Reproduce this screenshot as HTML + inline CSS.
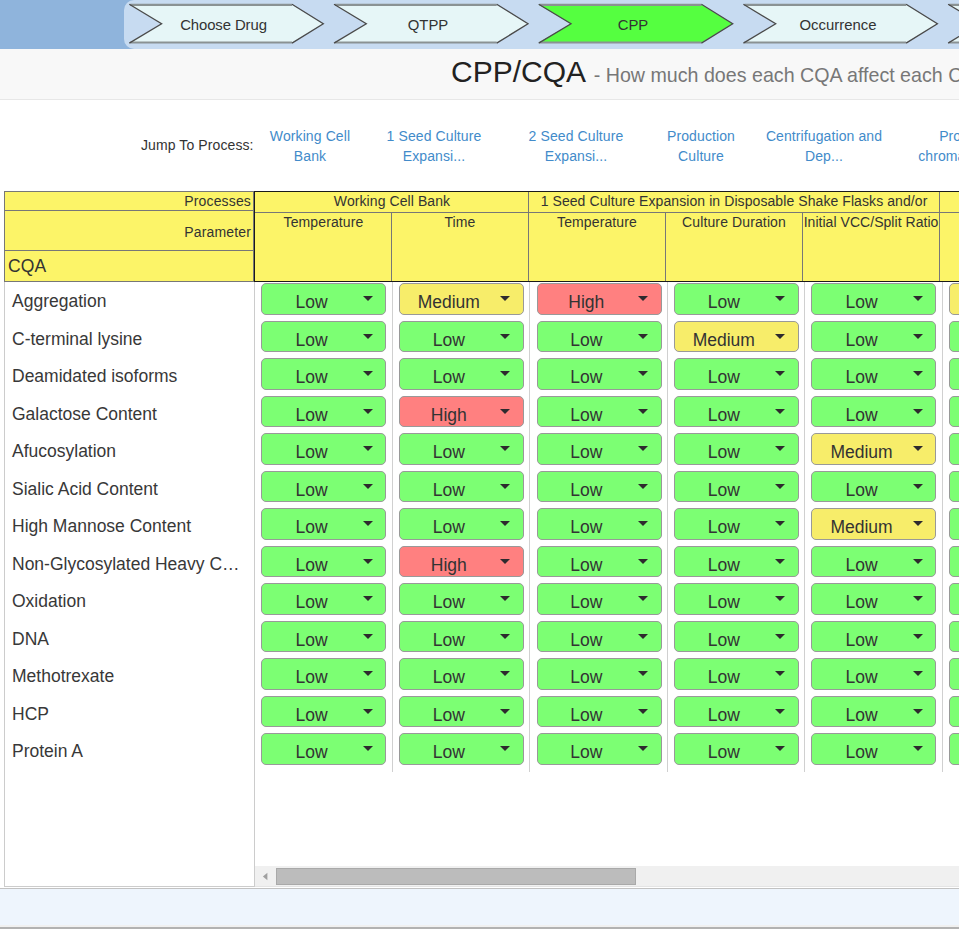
<!DOCTYPE html>
<html><head><meta charset="utf-8"><title>CPP/CQA</title>
<style>
html,body{margin:0;padding:0}
body{width:959px;height:929px;overflow:hidden;position:relative;background:#fff;font-family:"Liberation Sans",sans-serif;color:#333}
.abs{position:absolute}
#nav{position:absolute;left:0;top:0;width:959px;height:49px;background:#8fb4dc}
#navp{position:absolute;left:124px;top:0;width:900px;height:49px;background:#c7dbf1;border-radius:10px 0 0 10px}
#navsvg{position:absolute;left:0;top:0}
.nt{position:absolute;top:14.7px;width:160px;text-align:center;font-size:14.9px;line-height:20px;color:#333}
#tb{position:absolute;left:0;top:49px;width:959px;height:50px;background:#f8f8f8;border-bottom:1px solid #e7e7e7}
#h1{position:absolute;left:451px;top:53.5px;white-space:nowrap;font-size:30px;line-height:36px;color:#222}
#h1 small{font-size:19.65px;color:#777;margin-left:1px}
.jl{letter-spacing:0.1px;position:absolute;font-size:14px;line-height:20px;color:#428bca;text-align:center;white-space:nowrap;transform:translateX(-50%)}
#jt{position:absolute;left:100px;width:153.6px;top:135px;text-align:right;letter-spacing:0.1px;font-size:14px;line-height:20px;color:#333}
#lh{position:absolute;left:4px;top:191px;width:250px;height:91px;background:#fcf468;border:1px solid #777;box-sizing:border-box}
#lh div{position:absolute;left:0;width:248px;box-sizing:border-box;font-size:14px;letter-spacing:0.15px}
#rh{position:absolute;left:254px;top:191px;width:720px;height:91px;background:#fcf468;border:1px solid #1a1a1a;border-right:none;box-sizing:border-box}
.ph{letter-spacing:0.08px;position:absolute;top:192px;height:18px;line-height:18px;font-size:14px;text-align:center;color:#333;white-space:nowrap;overflow:hidden}
.pm{letter-spacing:0.12px;position:absolute;top:213px;height:18px;line-height:18px;font-size:14px;text-align:center;color:#333;white-space:nowrap;overflow:hidden}
.vl{position:absolute;width:1px;background:#777}
.cl{position:absolute;width:1px;background:#d0d0d0;top:282px;height:490px}
#lc{position:absolute;left:4px;top:282px;width:251px;height:605px;border:1px solid #ccc;border-top:none;box-sizing:border-box;background:#fff}
.rl{position:absolute;left:12px;width:236px;height:32px;line-height:36px;font-size:17.5px;color:#383838;white-space:nowrap;letter-spacing:0}
.b{position:absolute;width:125px;height:31.5px;box-sizing:border-box;border:1px solid #999;border-radius:5px}
.b span{position:absolute;left:-1px;width:101px;text-align:center;top:0px;line-height:36px;font-size:17.5px;color:#333;height:28px;overflow:visible}
.b i{position:absolute;left:101px;top:12.3px;width:0;height:0;border-left:5px solid transparent;border-right:5px solid transparent;border-top:5px solid #2e2a2e}
.lo{background:#7cff73}
.me{background:#f7ed6a}
.hi{background:#ff8080}
#sb{position:absolute;left:255px;top:866px;width:704px;height:20px;background:#f0f0f0;border-bottom:1px solid #e4e4e4}
#th{position:absolute;left:276px;top:868px;width:360px;height:17px;background:#bcbcbc;border:1px solid #a9a9a9;box-sizing:border-box}
#foot{position:absolute;left:0;top:888px;width:959px;height:36px;background:#eef5fd;border-top:1px solid #c2c2c2;box-sizing:content-box}
#foot2{position:absolute;left:0;top:925px;width:959px;height:2px;background:#f0f0f0}
#foot3{position:absolute;left:0;top:927px;width:959px;height:2px;background:#b2b2b2}
</style></head><body>
<div id="nav"></div><div id="navp"></div>
<svg id="navsvg" width="959" height="48" viewBox="0 0 959 48">
<polygon points="129.3,4.8 292.0,4.8 323.3,23.8 292.0,42.5 129.3,42.5 161.6,23.8" fill="#e6f6f7"/>
<path d="M130.3,4.8 H292.0 M130.3,42.5 H292.0" stroke="#8a9293" stroke-width="2.2" fill="none"/>
<path d="M129.3,4.2 L161.6,23.8 L129.3,43.1 M292.0,4.2 L323.3,23.8 L292.0,43.1" stroke="#4a4a4a" stroke-width="1.3" fill="none" stroke-linejoin="miter"/>
<polygon points="334.0,4.8 496.7,4.8 528.0,23.8 496.7,42.5 334.0,42.5 366.3,23.8" fill="#e6f6f7"/>
<path d="M335.0,4.8 H496.7 M335.0,42.5 H496.7" stroke="#8a9293" stroke-width="2.2" fill="none"/>
<path d="M334.0,4.2 L366.3,23.8 L334.0,43.1 M496.7,4.2 L528.0,23.8 L496.7,43.1" stroke="#4a4a4a" stroke-width="1.3" fill="none" stroke-linejoin="miter"/>
<polygon points="538.7,4.8 701.4,4.8 732.7,23.8 701.4,42.5 538.7,42.5 571.0,23.8" fill="#55ff40"/>
<path d="M539.7,4.8 H701.4 M539.7,42.5 H701.4" stroke="#8a9293" stroke-width="2.2" fill="none"/>
<path d="M538.7,4.2 L571.0,23.8 L538.7,43.1 M701.4,4.2 L732.7,23.8 L701.4,43.1" stroke="#4a4a4a" stroke-width="1.3" fill="none" stroke-linejoin="miter"/>
<polygon points="743.4,4.8 906.1,4.8 937.4,23.8 906.1,42.5 743.4,42.5 775.7,23.8" fill="#e6f6f7"/>
<path d="M744.4,4.8 H906.1 M744.4,42.5 H906.1" stroke="#8a9293" stroke-width="2.2" fill="none"/>
<path d="M743.4,4.2 L775.7,23.8 L743.4,43.1 M906.1,4.2 L937.4,23.8 L906.1,43.1" stroke="#4a4a4a" stroke-width="1.3" fill="none" stroke-linejoin="miter"/>
<polygon points="948.1,4.8 1110.8,4.8 1142.1,23.8 1110.8,42.5 948.1,42.5 980.4,23.8" fill="#e6f6f7"/>
<path d="M949.1,4.8 H1110.8 M949.1,42.5 H1110.8" stroke="#8a9293" stroke-width="2.2" fill="none"/>
<path d="M948.1,4.2 L980.4,23.8 L948.1,43.1 M1110.8,4.2 L1142.1,23.8 L1110.8,43.1" stroke="#4a4a4a" stroke-width="1.3" fill="none" stroke-linejoin="miter"/>
</svg>
<div class="nt" style="left:143.5px;letter-spacing:-0.1px">Choose Drug</div>
<div class="nt" style="left:348px">QTPP</div>
<div class="nt" style="left:553px">CPP</div>
<div class="nt" style="left:758px">Occurrence</div>
<div id="tb"></div>
<div id="h1">CPP/CQA <small>- How much does each CQA affect each CPP?</small></div>
<div id="jt">Jump To Process:</div>
<div class="jl" style="left:310px;top:126px">Working Cell<br>Bank</div>
<div class="jl" style="left:434px;top:126px">1 Seed Culture<br>Expansi...</div>
<div class="jl" style="left:576px;top:126px">2 Seed Culture<br>Expansi...</div>
<div class="jl" style="left:701px;top:126px">Production<br>Culture</div>
<div class="jl" style="left:824px;top:126px">Centrifugation and<br>Dep...</div>
<div class="jl" style="left:968px;top:126px">Protein A<br>chromatograp...</div>
<div id="lc"></div>
<div id="lh">
<div style="top:0;height:19px;line-height:18px;text-align:right;padding-right:2px;border-bottom:1px solid #777">Processes</div>
<div style="top:19px;height:40px;line-height:42px;text-align:right;padding-right:2px;border-bottom:1px solid #777">Parameter</div>
<div style="top:59px;height:30px;line-height:30.5px;text-align:left;padding-left:3px;font-size:17.5px">CQA</div>
</div>
<div id="rh"></div>
<div class="vl" style="left:255px;top:212px;height:1px;width:704px"></div>
<div class="vl" style="left:391px;top:213px;height:68px"></div>
<div class="vl" style="left:528px;top:192px;height:89px"></div>
<div class="vl" style="left:665px;top:213px;height:68px"></div>
<div class="vl" style="left:802px;top:213px;height:68px"></div>
<div class="vl" style="left:939px;top:192px;height:89px"></div>
<div class="ph" style="left:256px;width:272px">Working Cell Bank</div>
<div class="ph" style="left:529px;width:410px">1 Seed Culture Expansion in Disposable Shake Flasks and/or</div>
<div class="pm" style="left:256px;width:135px">Temperature</div>
<div class="pm" style="left:392px;width:136px">Time</div>
<div class="pm" style="left:529px;width:136px">Temperature</div>
<div class="pm" style="left:666px;width:136px">Culture Duration</div>
<div class="pm" style="left:803px;width:136px;letter-spacing:0.04px">Initial VCC/Split Ratio</div>
<div class="cl" style="left:392px"></div>
<div class="cl" style="left:529px"></div>
<div class="cl" style="left:667px"></div>
<div class="cl" style="left:804px"></div>
<div class="cl" style="left:942px"></div>
<div class="rl" style="top:283.0px">Aggregation</div>
<div class="b lo" style="left:261.0px;top:283.0px"><span style="left:-1.0px">Low</span><i style="left:101.0px"></i></div>
<div class="b me" style="left:399.0px;top:283.0px"><span style="left:-1.7px">Medium</span><i style="left:100.3px"></i></div>
<div class="b hi" style="left:537.0px;top:283.0px"><span style="left:-2.2px">High</span><i style="left:99.8px"></i></div>
<div class="b lo" style="left:674.0px;top:283.0px"><span style="left:-1.7px">Low</span><i style="left:100.3px"></i></div>
<div class="b lo" style="left:811.0px;top:283.0px"><span style="left:-1.0px">Low</span><i style="left:101.0px"></i></div>
<div class="b me" style="left:949.0px;top:283.0px"><span style="left:-1.0px">Medium</span><i style="left:101.0px"></i></div>
<div class="rl" style="top:320.5px">C-terminal lysine</div>
<div class="b lo" style="left:261.0px;top:320.5px"><span style="left:-1.0px">Low</span><i style="left:101.0px"></i></div>
<div class="b lo" style="left:399.0px;top:320.5px"><span style="left:-1.7px">Low</span><i style="left:100.3px"></i></div>
<div class="b lo" style="left:537.0px;top:320.5px"><span style="left:-2.2px">Low</span><i style="left:99.8px"></i></div>
<div class="b me" style="left:674.0px;top:320.5px"><span style="left:-1.7px">Medium</span><i style="left:100.3px"></i></div>
<div class="b lo" style="left:811.0px;top:320.5px"><span style="left:-1.0px">Low</span><i style="left:101.0px"></i></div>
<div class="b lo" style="left:949.0px;top:320.5px"><span style="left:-1.0px">Low</span><i style="left:101.0px"></i></div>
<div class="rl" style="top:358.0px">Deamidated isoforms</div>
<div class="b lo" style="left:261.0px;top:358.0px"><span style="left:-1.0px">Low</span><i style="left:101.0px"></i></div>
<div class="b lo" style="left:399.0px;top:358.0px"><span style="left:-1.7px">Low</span><i style="left:100.3px"></i></div>
<div class="b lo" style="left:537.0px;top:358.0px"><span style="left:-2.2px">Low</span><i style="left:99.8px"></i></div>
<div class="b lo" style="left:674.0px;top:358.0px"><span style="left:-1.7px">Low</span><i style="left:100.3px"></i></div>
<div class="b lo" style="left:811.0px;top:358.0px"><span style="left:-1.0px">Low</span><i style="left:101.0px"></i></div>
<div class="b lo" style="left:949.0px;top:358.0px"><span style="left:-1.0px">Low</span><i style="left:101.0px"></i></div>
<div class="rl" style="top:395.5px">Galactose Content</div>
<div class="b lo" style="left:261.0px;top:395.5px"><span style="left:-1.0px">Low</span><i style="left:101.0px"></i></div>
<div class="b hi" style="left:399.0px;top:395.5px"><span style="left:-1.7px">High</span><i style="left:100.3px"></i></div>
<div class="b lo" style="left:537.0px;top:395.5px"><span style="left:-2.2px">Low</span><i style="left:99.8px"></i></div>
<div class="b lo" style="left:674.0px;top:395.5px"><span style="left:-1.7px">Low</span><i style="left:100.3px"></i></div>
<div class="b lo" style="left:811.0px;top:395.5px"><span style="left:-1.0px">Low</span><i style="left:101.0px"></i></div>
<div class="b lo" style="left:949.0px;top:395.5px"><span style="left:-1.0px">Low</span><i style="left:101.0px"></i></div>
<div class="rl" style="top:433.0px">Afucosylation</div>
<div class="b lo" style="left:261.0px;top:433.0px"><span style="left:-1.0px">Low</span><i style="left:101.0px"></i></div>
<div class="b lo" style="left:399.0px;top:433.0px"><span style="left:-1.7px">Low</span><i style="left:100.3px"></i></div>
<div class="b lo" style="left:537.0px;top:433.0px"><span style="left:-2.2px">Low</span><i style="left:99.8px"></i></div>
<div class="b lo" style="left:674.0px;top:433.0px"><span style="left:-1.7px">Low</span><i style="left:100.3px"></i></div>
<div class="b me" style="left:811.0px;top:433.0px"><span style="left:-1.0px">Medium</span><i style="left:101.0px"></i></div>
<div class="b lo" style="left:949.0px;top:433.0px"><span style="left:-1.0px">Low</span><i style="left:101.0px"></i></div>
<div class="rl" style="top:470.5px">Sialic Acid Content</div>
<div class="b lo" style="left:261.0px;top:470.5px"><span style="left:-1.0px">Low</span><i style="left:101.0px"></i></div>
<div class="b lo" style="left:399.0px;top:470.5px"><span style="left:-1.7px">Low</span><i style="left:100.3px"></i></div>
<div class="b lo" style="left:537.0px;top:470.5px"><span style="left:-2.2px">Low</span><i style="left:99.8px"></i></div>
<div class="b lo" style="left:674.0px;top:470.5px"><span style="left:-1.7px">Low</span><i style="left:100.3px"></i></div>
<div class="b lo" style="left:811.0px;top:470.5px"><span style="left:-1.0px">Low</span><i style="left:101.0px"></i></div>
<div class="b lo" style="left:949.0px;top:470.5px"><span style="left:-1.0px">Low</span><i style="left:101.0px"></i></div>
<div class="rl" style="top:508.0px">High Mannose Content</div>
<div class="b lo" style="left:261.0px;top:508.0px"><span style="left:-1.0px">Low</span><i style="left:101.0px"></i></div>
<div class="b lo" style="left:399.0px;top:508.0px"><span style="left:-1.7px">Low</span><i style="left:100.3px"></i></div>
<div class="b lo" style="left:537.0px;top:508.0px"><span style="left:-2.2px">Low</span><i style="left:99.8px"></i></div>
<div class="b lo" style="left:674.0px;top:508.0px"><span style="left:-1.7px">Low</span><i style="left:100.3px"></i></div>
<div class="b me" style="left:811.0px;top:508.0px"><span style="left:-1.0px">Medium</span><i style="left:101.0px"></i></div>
<div class="b lo" style="left:949.0px;top:508.0px"><span style="left:-1.0px">Low</span><i style="left:101.0px"></i></div>
<div class="rl" style="top:545.5px">Non-Glycosylated Heavy C…</div>
<div class="b lo" style="left:261.0px;top:545.5px"><span style="left:-1.0px">Low</span><i style="left:101.0px"></i></div>
<div class="b hi" style="left:399.0px;top:545.5px"><span style="left:-1.7px">High</span><i style="left:100.3px"></i></div>
<div class="b lo" style="left:537.0px;top:545.5px"><span style="left:-2.2px">Low</span><i style="left:99.8px"></i></div>
<div class="b lo" style="left:674.0px;top:545.5px"><span style="left:-1.7px">Low</span><i style="left:100.3px"></i></div>
<div class="b lo" style="left:811.0px;top:545.5px"><span style="left:-1.0px">Low</span><i style="left:101.0px"></i></div>
<div class="b lo" style="left:949.0px;top:545.5px"><span style="left:-1.0px">Low</span><i style="left:101.0px"></i></div>
<div class="rl" style="top:583.0px">Oxidation</div>
<div class="b lo" style="left:261.0px;top:583.0px"><span style="left:-1.0px">Low</span><i style="left:101.0px"></i></div>
<div class="b lo" style="left:399.0px;top:583.0px"><span style="left:-1.7px">Low</span><i style="left:100.3px"></i></div>
<div class="b lo" style="left:537.0px;top:583.0px"><span style="left:-2.2px">Low</span><i style="left:99.8px"></i></div>
<div class="b lo" style="left:674.0px;top:583.0px"><span style="left:-1.7px">Low</span><i style="left:100.3px"></i></div>
<div class="b lo" style="left:811.0px;top:583.0px"><span style="left:-1.0px">Low</span><i style="left:101.0px"></i></div>
<div class="b lo" style="left:949.0px;top:583.0px"><span style="left:-1.0px">Low</span><i style="left:101.0px"></i></div>
<div class="rl" style="top:620.5px">DNA</div>
<div class="b lo" style="left:261.0px;top:620.5px"><span style="left:-1.0px">Low</span><i style="left:101.0px"></i></div>
<div class="b lo" style="left:399.0px;top:620.5px"><span style="left:-1.7px">Low</span><i style="left:100.3px"></i></div>
<div class="b lo" style="left:537.0px;top:620.5px"><span style="left:-2.2px">Low</span><i style="left:99.8px"></i></div>
<div class="b lo" style="left:674.0px;top:620.5px"><span style="left:-1.7px">Low</span><i style="left:100.3px"></i></div>
<div class="b lo" style="left:811.0px;top:620.5px"><span style="left:-1.0px">Low</span><i style="left:101.0px"></i></div>
<div class="b lo" style="left:949.0px;top:620.5px"><span style="left:-1.0px">Low</span><i style="left:101.0px"></i></div>
<div class="rl" style="top:658.0px">Methotrexate</div>
<div class="b lo" style="left:261.0px;top:658.0px"><span style="left:-1.0px">Low</span><i style="left:101.0px"></i></div>
<div class="b lo" style="left:399.0px;top:658.0px"><span style="left:-1.7px">Low</span><i style="left:100.3px"></i></div>
<div class="b lo" style="left:537.0px;top:658.0px"><span style="left:-2.2px">Low</span><i style="left:99.8px"></i></div>
<div class="b lo" style="left:674.0px;top:658.0px"><span style="left:-1.7px">Low</span><i style="left:100.3px"></i></div>
<div class="b lo" style="left:811.0px;top:658.0px"><span style="left:-1.0px">Low</span><i style="left:101.0px"></i></div>
<div class="b lo" style="left:949.0px;top:658.0px"><span style="left:-1.0px">Low</span><i style="left:101.0px"></i></div>
<div class="rl" style="top:695.5px">HCP</div>
<div class="b lo" style="left:261.0px;top:695.5px"><span style="left:-1.0px">Low</span><i style="left:101.0px"></i></div>
<div class="b lo" style="left:399.0px;top:695.5px"><span style="left:-1.7px">Low</span><i style="left:100.3px"></i></div>
<div class="b lo" style="left:537.0px;top:695.5px"><span style="left:-2.2px">Low</span><i style="left:99.8px"></i></div>
<div class="b lo" style="left:674.0px;top:695.5px"><span style="left:-1.7px">Low</span><i style="left:100.3px"></i></div>
<div class="b lo" style="left:811.0px;top:695.5px"><span style="left:-1.0px">Low</span><i style="left:101.0px"></i></div>
<div class="b lo" style="left:949.0px;top:695.5px"><span style="left:-1.0px">Low</span><i style="left:101.0px"></i></div>
<div class="rl" style="top:733.0px">Protein A</div>
<div class="b lo" style="left:261.0px;top:733.0px"><span style="left:-1.0px">Low</span><i style="left:101.0px"></i></div>
<div class="b lo" style="left:399.0px;top:733.0px"><span style="left:-1.7px">Low</span><i style="left:100.3px"></i></div>
<div class="b lo" style="left:537.0px;top:733.0px"><span style="left:-2.2px">Low</span><i style="left:99.8px"></i></div>
<div class="b lo" style="left:674.0px;top:733.0px"><span style="left:-1.7px">Low</span><i style="left:100.3px"></i></div>
<div class="b lo" style="left:811.0px;top:733.0px"><span style="left:-1.0px">Low</span><i style="left:101.0px"></i></div>
<div class="b lo" style="left:949.0px;top:733.0px"><span style="left:-1.0px">Low</span><i style="left:101.0px"></i></div>
<div id="sb"></div><div id="th"></div>
<svg class="abs" style="left:262px;top:871px" width="8" height="11"><polygon points="5.4,1.8 5.4,9.2 0.9,5.5" fill="#a0a0a0"/></svg>
<div id="foot"></div><div id="foot2"></div><div id="foot3"></div>
</body></html>
